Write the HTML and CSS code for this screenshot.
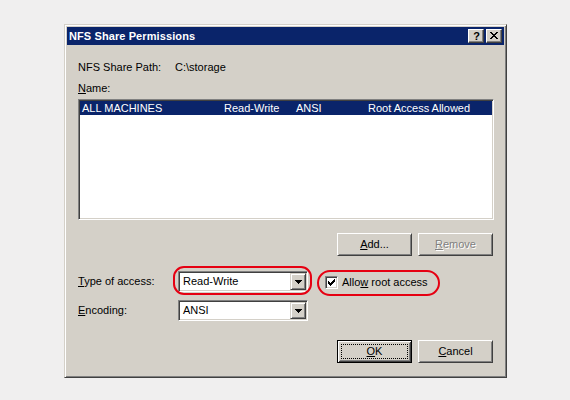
FILE: index.html
```html
<!DOCTYPE html>
<html>
<head>
<meta charset="utf-8">
<link rel="stylesheet" href="styles.css">
</head>
<body>
<div class="window">
  <div class="titlebar">
    <span class="title">NFS Share Permissions</span>
    <div class="caption-btns">
      <span class="cap-btn help">?</span>
      <span class="cap-btn close"><svg width="8" height="7" viewBox="0 0 8 7"><path d="M0 0h2v1h-2zM6 0h2v1h-2zM1 1h2v1h-2zM5 1h2v1h-2zM2 2h4v1h-4zM3 3h2v1h-2zM2 4h4v1h-4zM1 5h2v1h-2zM5 5h2v1h-2zM0 6h2v1h-2zM6 6h2v1h-2z" fill="#000"/></svg></span>
    </div>
  </div>
  <div class="content">
    <div class="path-row"><span class="path-label">NFS Share Path:</span><span>C:\storage</span></div>
    <div class="name-label"><u>N</u>ame:</div>
    <div class="listbox">
      <div class="list-row selected"><span>ALL MACHINES</span><span>Read-Write</span><span>ANSI</span><span>Root Access Allowed</span></div>
    </div>
    <div class="btn-row list-btns">
      <div class="btn"><span><u>A</u>dd...</span></div>
      <div class="btn disabled"><span><u>R</u>emove</span></div>
    </div>
    <div class="form-row type-row">
      <span class="field-label"><u>T</u>ype of access:</span>
      <div class="combo ringed-combo">
        <span class="combo-text">Read-Write</span>
        <span class="drop"><svg width="7" height="4" viewBox="0 0 7 4"><path d="M0 0h7v1h-7zM1 1h5v1h-5zM2 2h3v1h-3zM3 3h1v1h-1z" fill="#000"/></svg></span>
      </div>
      <div class="check ringed-check">
        <span class="check-box"><svg width="7" height="7" viewBox="0 0 7 7"><path d="M6 0h1v1h-1zM5 1h2v1h-2zM0 2h1v1h-1zM4 2h3v1h-3zM0 3h2v1h-2zM3 3h3v1h-3zM0 4h5v1h-5zM1 5h3v1h-3zM2 6h1v1h-1z" fill="#000"/></svg></span>
        <span class="check-text">Allo<u>w</u> root access</span>
      </div>
    </div>
    <div class="form-row enc-row">
      <span class="field-label"><u>E</u>ncoding:</span>
      <div class="combo">
        <span class="combo-text">ANSI</span>
        <span class="drop"><svg width="7" height="4" viewBox="0 0 7 4"><path d="M0 0h7v1h-7zM1 1h5v1h-5zM2 2h3v1h-3zM3 3h1v1h-1z" fill="#000"/></svg></span>
      </div>
    </div>
    <div class="btn-row dialog-btns">
      <div class="btn default"><span><u>O</u>K</span></div>
      <div class="btn"><span><u>C</u>ancel</span></div>
    </div>
  </div>
</div>
</body>
</html>
```

FILE: styles.css
```css
html, body {
  margin: 0;
  padding: 0;
}
body {
  width: 570px;
  height: 400px;
  background: #f0efef;
  font-family: "Liberation Sans", Arial, sans-serif;
  font-size: 11px;
  color: #000;
  overflow: hidden;
}
.window {
  box-sizing: border-box;
  margin: 24px 0 0 64px;
  width: 443px;
  height: 354px;
  background: #d4d0c8;
  border: 1px solid;
  border-color: #d4d0c8 #404040 #404040 #d4d0c8;
  box-shadow: inset 1px 1px #fff, inset -1px -1px #808080;
  padding: 2px;
  display: flex;
  flex-direction: column;
}
.titlebar {
  height: 18px;
  background: #0a246a;
  display: flex;
  align-items: center;
  justify-content: space-between;
  padding: 0 2px 0 2px;
}
.title {
  color: #fff;
  font-weight: bold;
  font-size: 11px;
  letter-spacing: 0.1px;
}
.caption-btns {
  display: flex;
  gap: 2px;
}
.cap-btn {
  box-sizing: border-box;
  width: 16px;
  height: 14px;
  background: #d4d0c8;
  border: 1px solid;
  border-color: #fff #404040 #404040 #fff;
  box-shadow: inset -1px -1px #808080;
  display: flex;
  align-items: center;
  justify-content: center;
}
.help {
  font-weight: bold;
  font-size: 11px;
  line-height: 12px;
  padding-left: 1px;
}
.close svg {
  display: block;
  margin-left: -1px;
  margin-top: -1px;
}
.content {
  flex: 1;
  padding: 0 10px 0 11px;
  display: flex;
  flex-direction: column;
}
.path-row {
  margin-top: 16px;
  line-height: 13px;
  height: 13px;
  display: flex;
}
.path-label {
  width: 97px;
}
.name-label {
  margin-top: 8px;
  line-height: 13px;
  height: 13px;
}
.listbox {
  box-sizing: border-box;
  margin-top: 4px;
  height: 121px;
  background: #fff;
  border: 1px solid;
  border-color: #808080 #fff #fff #808080;
  box-shadow: inset 1px 1px #404040, inset -1px -1px #d4d0c8;
  padding: 1px;
}
.list-row {
  display: grid;
  grid-template-columns: 142px 72px 72px 1fr;
  height: 14px;
  line-height: 14px;
  padding-left: 2px;
}
.list-row.selected {
  background: #0a246a;
  color: #fff;
}
.btn-row {
  display: flex;
  justify-content: flex-end;
  gap: 6px;
  padding-right: 1px;
}
.list-btns {
  margin-top: 13px;
}
.dialog-btns {
  margin-top: 19px;
}
.btn {
  position: relative;
  box-sizing: border-box;
  width: 75px;
  height: 23px;
  background: #d4d0c8;
  border: 1px solid;
  border-color: #fff #404040 #404040 #fff;
  box-shadow: inset 1px 1px #d4d0c8, inset -1px -1px #808080;
  display: flex;
  align-items: center;
  justify-content: center;
  line-height: 13px;
}
.btn.disabled {
  color: #808080;
  text-shadow: 1px 1px #fff;
}
.btn.default {
  border-color: #000;
  box-shadow: inset 1px 1px #fff, inset -1px -1px #404040, inset 2px 2px #d4d0c8, inset -2px -2px #808080;
}
.btn.default::after {
  content: "";
  position: absolute;
  left: 3px;
  top: 3px;
  right: 3px;
  bottom: 3px;
  border: 1px dotted #000;
}
.form-row {
  display: flex;
  align-items: center;
  height: 21px;
}
.type-row {
  margin-top: 15px;
}
.enc-row {
  margin-top: 8px;
}
.field-label {
  width: 100px;
  line-height: 13px;
}
.combo {
  position: relative;
  box-sizing: border-box;
  width: 130px;
  height: 21px;
  background: #fff;
  border: 1px solid;
  border-color: #808080 #fff #fff #808080;
  box-shadow: inset 1px 1px #404040, inset -1px -1px #d4d0c8;
  padding: 1px;
  display: flex;
}
.combo-text {
  flex: 1;
  padding-left: 3px;
  line-height: 17px;
}
.drop {
  box-sizing: border-box;
  width: 16px;
  height: 17px;
  background: #d4d0c8;
  border: 1px solid;
  border-color: #d4d0c8 #404040 #404040 #d4d0c8;
  box-shadow: inset 1px 1px #fff, inset -1px -1px #808080;
  display: flex;
  align-items: center;
  justify-content: center;
}
.drop svg {
  display: block;
}
.ringed-combo::after {
  content: "";
  position: absolute;
  left: -6px;
  top: -6px;
  right: -5px;
  bottom: -4px;
  border: 2px solid #e60012;
  border-radius: 11px;
}
.check {
  position: relative;
  margin-left: 17px;
  display: flex;
  align-items: center;
  gap: 4px;
  height: 13px;
  margin-top: 1px;
}
.check-box {
  box-sizing: border-box;
  width: 13px;
  height: 13px;
  background: #fff;
  border: 1px solid;
  border-color: #808080 #fff #fff #808080;
  box-shadow: inset 1px 1px #404040, inset -1px -1px #d4d0c8;
  display: flex;
  align-items: center;
  justify-content: center;
}
.check-box svg {
  display: block;
}
.check-text {
  line-height: 13px;
}
.ringed-check::after {
  content: "";
  position: absolute;
  left: -8px;
  top: -6px;
  right: -12px;
  bottom: -7px;
  border: 2px solid #e60012;
  border-radius: 13px;
}
```
